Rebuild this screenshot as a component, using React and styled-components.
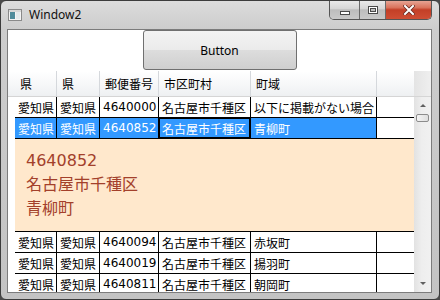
import React from 'react';
import styled, { createGlobalStyle } from 'styled-components';

const Global = createGlobalStyle`
  html, body { margin: 0; padding: 0; background: #4a4a4a; }
  body { width: 440px; height: 300px; overflow: hidden; }
  * { box-sizing: border-box; }
`;

const CJK = `"DejaVu Sans", "Noto Sans CJK JP", sans-serif`;

const Window = styled.div`
  width: 440px;
  height: 300px;
  border: 1px solid #3c3c3c;
  border-radius: 6px;
  background: linear-gradient(to bottom, #dcdcdc 0px, #cdcdcd 28px, #c3c3c3 100%);
  display: flex;
  flex-direction: column;
  padding: 0 7px 6px 6px;
  overflow: hidden;
`;

const TitleBar = styled.div`
  height: 28px;
  flex: none;
  display: flex;
  align-items: flex-start;
`;

const AppIcon = styled.svg`
  margin: 8px 0 0 1px;
  flex: none;
`;

const Title = styled.div`
  margin-left: 7px;
  font: 12px "Noto Sans", "DejaVu Sans", sans-serif;
  line-height: 27px;
  color: #111;
`;

const CaptionGroup = styled.div`
  margin-left: auto;
  margin-top: -1px;
  height: 20px;
  display: flex;
  border: 1px solid #555;
  border-top: none;
  border-radius: 0 0 5px 5px;
  overflow: hidden;
`;

const CapBtn = styled.div`
  width: ${p => p.$w}px;
  height: 100%;
  display: flex;
  align-items: center;
  justify-content: center;
  border-left: ${p => (p.$first ? 'none' : '1px solid #6a6a6a')};
  background: ${p =>
    p.$close
      ? 'linear-gradient(to bottom, #e9ab9c 0%, #d9735c 40%, #c33f27 52%, #cf4e34 100%)'
      : 'linear-gradient(to bottom, #ececec 0%, #d6d6d6 45%, #bdbdbd 52%, #c9c9c9 100%)'};
`;

const MinGlyph = styled.div`
  width: 10px;
  height: 4px;
  margin-top: 7px;
  background: #fff;
  border: 1px solid #4a4a4a;
`;

const MaxGlyph = styled.div`
  width: 10px;
  height: 8px;
  border: 1px solid #4a4a4a;
  background: transparent;
  box-shadow: inset 0 0 0 1px #fff, inset 0 0 0 2px #4a4a4a;
`;

const Client = styled.div`
  flex: 1;
  min-height: 0;
  border: 1px solid #7c7c7c;
  background: #fff;
  display: flex;
  flex-direction: column;
`;

const Toolbar = styled.div`
  height: 41px;
  flex: none;
  display: flex;
  justify-content: center;
  align-items: flex-start;
`;

const Button = styled.button`
  width: 154px;
  height: 40px;
  margin: 0;
  padding: 0;
  border: 1px solid #707070;
  border-radius: 3px;
  background: linear-gradient(to bottom, #f3f3f3 0%, #ebebeb 50%, #dddddd 50%, #cfcfcf 100%);
  font: 12px "Noto Sans", "DejaVu Sans", sans-serif;
  color: #000;
`;

const Grid = styled.div`
  flex: 1;
  min-height: 0;
  display: flex;
  flex-direction: column;
  font-family: ${CJK};
  font-size: 12px;
`;

const HeaderRow = styled.div`
  height: 26px;
  flex: none;
  display: flex;
  background: linear-gradient(to bottom, #ffffff 0%, #f7f8f9 50%, #eef0f2 100%);
  border-bottom: 1px solid #d5d5d5;
`;

const HeaderCorner = styled.div`
  width: 7px;
  flex: none;
`;

const HeaderCell = styled.div`
  width: ${p => p.$w}px;
  flex: none;
  display: flex;
  align-items: center;
  padding-left: 5px;
  border-right: 1px solid #d5d8dc;
  color: #000;
  white-space: nowrap;
  overflow: hidden;
`;

const ScrollCorner = styled.div`
  width: 17px;
  flex: none;
  margin-left: auto;
  background: linear-gradient(to right, #e4e4e4, #efefef);
`;

const Body = styled.div`
  flex: 1;
  min-height: 0;
  display: flex;
`;

const RowsArea = styled.div`
  width: 406px;
  flex: none;
  overflow: hidden;
`;

const Row = styled.div`
  display: flex;
  height: 21px;
`;

const RowHead = styled.div`
  width: 7px;
  flex: none;
  background: #fff;
`;

const Cells = styled.div`
  flex: 1;
  display: flex;
  border-bottom: 1px solid #000;
`;

const Cell = styled.div`
  width: ${p => p.$w}px;
  flex: none;
  display: flex;
  align-items: center;
  padding-left: 3px;
  border-right: ${p => (p.$noline ? 'none' : '1px solid #000')};
  background: ${p => (p.$sel ? '#3399ff' : '#fff')};
  color: ${p => (p.$sel ? '#fff' : '#000')};
  box-shadow: ${p => (p.$focus ? 'inset 0 0 0 1px #000' : 'none')};
  white-space: nowrap;
  overflow: hidden;
`;

const DetailRow = styled.div`
  display: flex;
`;

const Detail = styled.div`
  flex: 1;
  height: 93px;
  background: #ffe8cc;
  border-bottom: 1px solid #000;
  padding: 10px 11px;
  color: #a3402b;
  font-size: 16px;
  line-height: 24px;
`;

const VScroll = styled.div`
  width: 17px;
  flex: none;
  display: flex;
  flex-direction: column;
  background: linear-gradient(to right, #e2e2e2 0%, #eeeeee 45%, #f1f1f1 100%);
`;

const ArrowBtn = styled.div`
  height: 17px;
  flex: none;
  display: flex;
  align-items: center;
  justify-content: center;
`;

const Arrow = styled.div`
  width: 0;
  height: 0;
  border-left: 3px solid transparent;
  border-right: 3px solid transparent;
  ${p => (p.$up ? 'border-bottom: 3px solid #606060;' : 'border-top: 3px solid #606060;')}
`;

const Track = styled.div`
  flex: 1;
`;

const Thumb = styled.div`
  height: 8px;
  margin: 0 2px;
  border: 1px solid #8c8c8c;
  border-radius: 2px;
  background: linear-gradient(to right, #f4f4f4, #dedede);
`;

const COLS = [42, 43, 59, 92, 126];
const HEADERS = ['県', '県', '郵便番号', '市区町村', '町域'];
const FILLER = 37;

const rowsTop = [['愛知県', '愛知県', '4640000', '名古屋市千種区', '以下に掲載がない場合']];
const selected = ['愛知県', '愛知県', '4640852', '名古屋市千種区', '青柳町'];
const rowsBottom = [
  ['愛知県', '愛知県', '4640094', '名古屋市千種区', '赤坂町'],
  ['愛知県', '愛知県', '4640019', '名古屋市千種区', '揚羽町'],
  ['愛知県', '愛知県', '4640811', '名古屋市千種区', '朝岡町'],
];

function DataRow({ data, sel }) {
  return (
    <Row>
      <RowHead />
      <Cells>
        {data.map((t, i) => (
          <Cell key={i} $w={COLS[i]} $sel={sel} $focus={sel && i === 3}>
            {t}
          </Cell>
        ))}
        <Cell $w={FILLER} $noline />
      </Cells>
    </Row>
  );
}

export default function App() {
  return (
    <>
      <Global />
      <Window>
        <TitleBar>
          <AppIcon width="14" height="12" viewBox="0 0 14 12">
            <rect x="0.5" y="0.5" width="13" height="11" fill="#f4f4f4" stroke="#8a8a8a" />
            <rect x="1" y="1" width="12" height="2" fill="#d8d8d8" />
            <rect x="2" y="3" width="5" height="7" fill="#4f8c9c" />
            <rect x="8" y="3" width="4" height="7" fill="#e4eaec" />
          </AppIcon>
          <Title>Window2</Title>
          <CaptionGroup>
            <CapBtn $w={29} $first>
              <MinGlyph />
            </CapBtn>
            <CapBtn $w={26}>
              <MaxGlyph />
            </CapBtn>
            <CapBtn $w={46} $close>
              <svg width="12" height="10" viewBox="0 0 12 10">
                <path d="M2 1 L10 9 M10 1 L2 9" stroke="#6b2a20" strokeWidth="3.6" strokeLinecap="square" />
                <path d="M2 1 L10 9 M10 1 L2 9" stroke="#ffffff" strokeWidth="2" strokeLinecap="square" />
              </svg>
            </CapBtn>
          </CaptionGroup>
        </TitleBar>
        <Client>
          <Toolbar>
            <Button>Button</Button>
          </Toolbar>
          <Grid>
            <HeaderRow>
              <HeaderCorner />
              {HEADERS.map((h, i) => (
                <HeaderCell key={i} $w={COLS[i]}>
                  {h}
                </HeaderCell>
              ))}
              <ScrollCorner />
            </HeaderRow>
            <Body>
              <RowsArea>
                {rowsTop.map((r, i) => (
                  <DataRow key={'t' + i} data={r} />
                ))}
                <DataRow data={selected} sel />
                <DetailRow>
                  <RowHead />
                  <Detail>
                    <div>4640852</div>
                    <div>名古屋市千種区</div>
                    <div>青柳町</div>
                  </Detail>
                </DetailRow>
                {rowsBottom.map((r, i) => (
                  <DataRow key={'b' + i} data={r} />
                ))}
              </RowsArea>
              <VScroll>
                <ArrowBtn>
                  <Arrow $up />
                </ArrowBtn>
                <Track>
                  <Thumb />
                </Track>
                <ArrowBtn>
                  <Arrow />
                </ArrowBtn>
              </VScroll>
            </Body>
          </Grid>
        </Client>
      </Window>
    </>
  );
}
